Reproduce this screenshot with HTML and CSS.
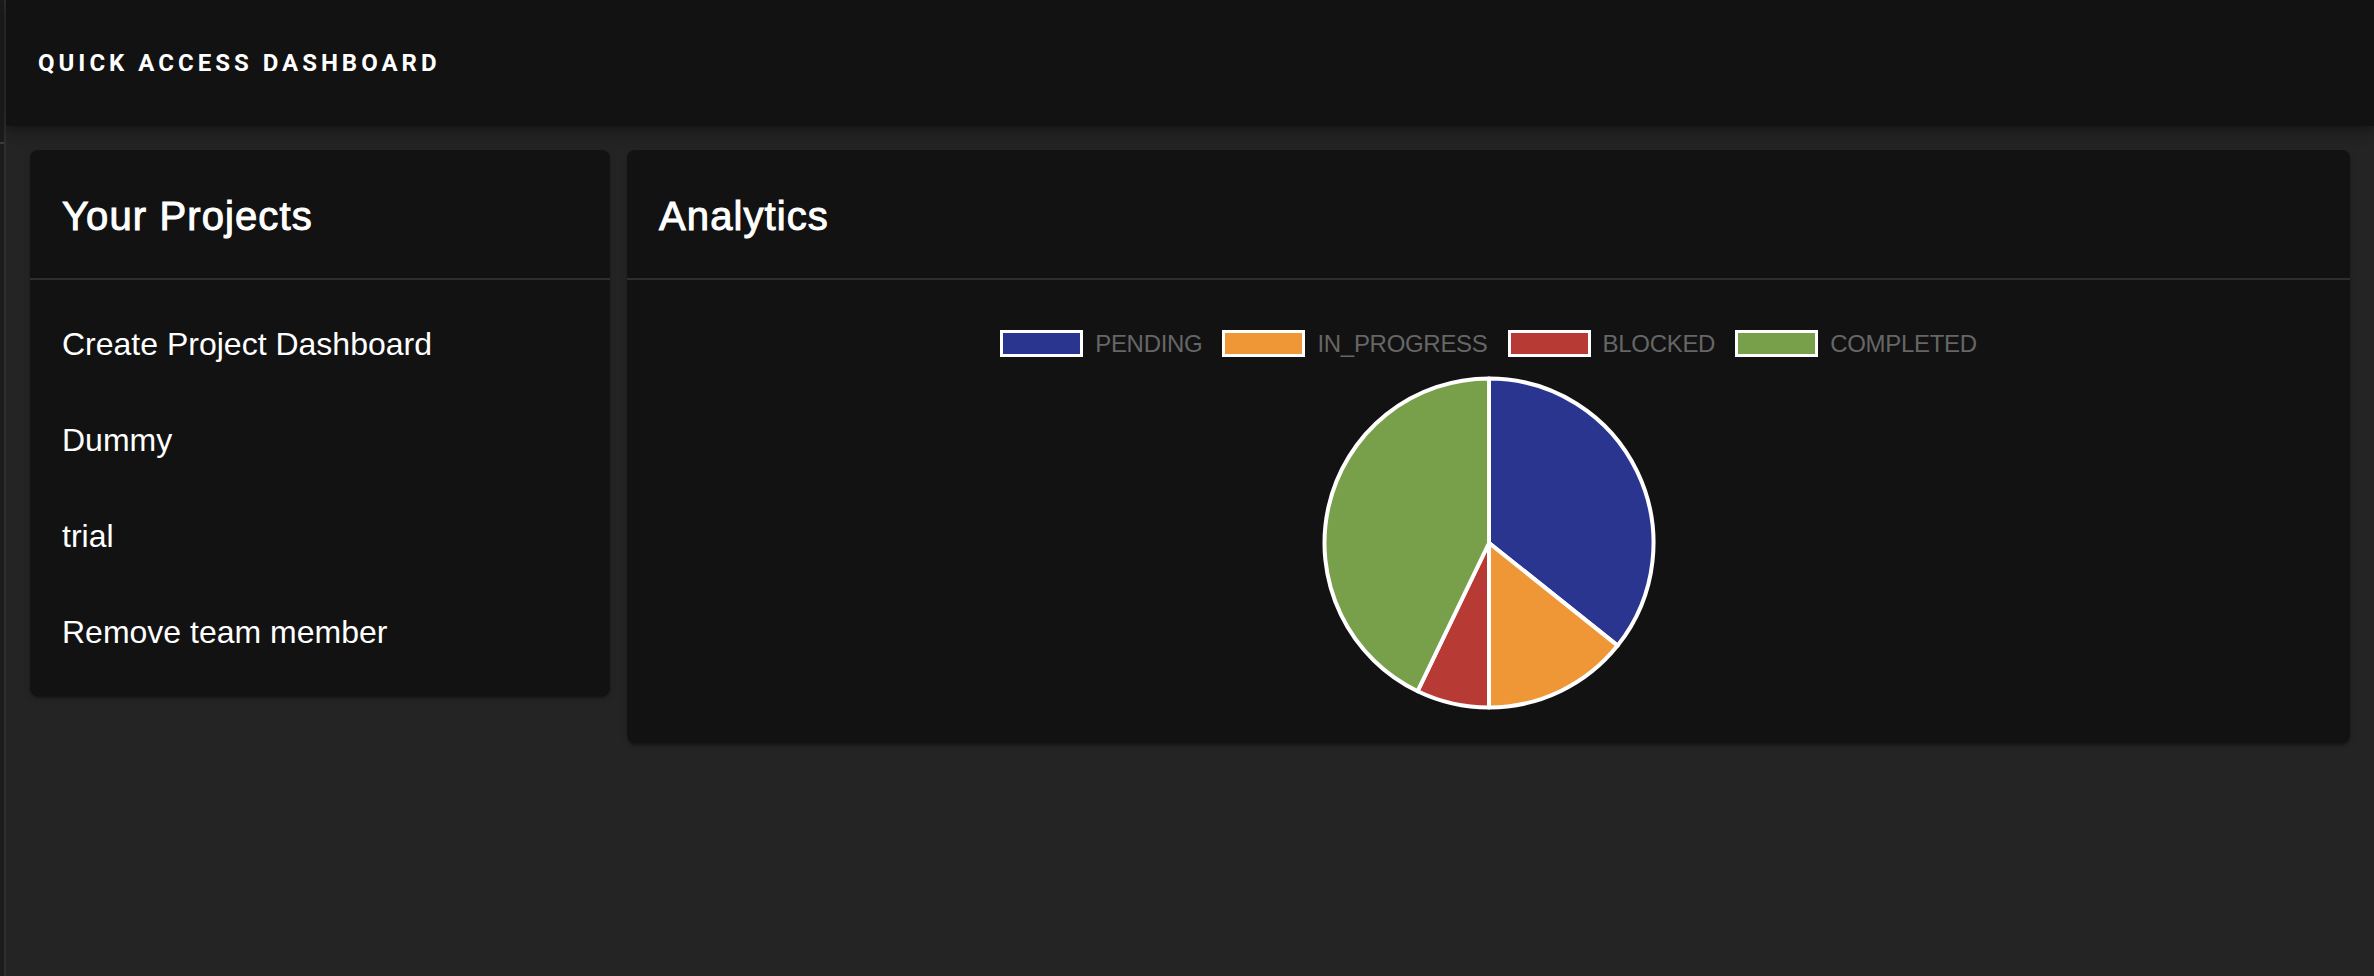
FILE: index.html
```html
<!DOCTYPE html>
<html lang="en">
<head>
<meta charset="utf-8">
<title>Quick Access Dashboard</title>
<link rel="stylesheet" href="styles.css">
</head>
<body>
<div class="app">
  <aside class="drawer"><div class="drawer-divider"></div></aside>
  <div class="main">
    <header class="appbar">
      <h1 class="brand">QUICK ACCESS DASHBOARD</h1>
    </header>
    <div class="content">
      <section class="card projects">
        <div class="card-header"><h2 class="card-title">Your Projects</h2></div>
        <div class="divider"></div>
        <ul class="list">
          <li class="list-item">Create Project Dashboard</li>
          <li class="list-item">Dummy</li>
          <li class="list-item">trial</li>
          <li class="list-item">Remove team member</li>
        </ul>
      </section>
      <section class="card analytics">
        <div class="card-header"><h2 class="card-title">Analytics</h2></div>
        <div class="divider"></div>
        <div class="card-content">
          <div class="legend">
            <div class="legend-item"><span class="swatch pending"></span><span class="legend-label">PENDING</span></div>
            <div class="legend-item"><span class="swatch progress"></span><span class="legend-label">IN_PROGRESS</span></div>
            <div class="legend-item"><span class="swatch blocked"></span><span class="legend-label">BLOCKED</span></div>
            <div class="legend-item"><span class="swatch completed"></span><span class="legend-label">COMPLETED</span></div>
          </div>
          <svg class="pie" width="340" height="340" viewBox="0 0 340 340">
            <g stroke="#ffffff" stroke-width="4" stroke-linejoin="round">
              <path fill="#2a358f" d="M170 170 L170 5.5 A164.5 164.5 0 0 1 298.61 272.57 Z"/>
              <path fill="#ef9737" d="M170 170 L298.61 272.57 A164.5 164.5 0 0 1 170 334.5 Z"/>
              <path fill="#b83a34" d="M170 170 L170 334.5 A164.5 164.5 0 0 1 98.63 318.21 Z"/>
              <path fill="#789f4a" d="M170 170 L98.63 318.21 A164.5 164.5 0 0 1 170 5.5 Z"/>
            </g>
          </svg>
        </div>
      </section>
    </div>
  </div>
</div>
</body>
</html>
```

FILE: styles.css
```css
* { box-sizing: border-box; }
html, body {
  margin: 0;
  padding: 0;
  height: 100%;
  background: #242424;
  font-family: "Liberation Sans", Arial, sans-serif;
  color: #ffffff;
}
.app {
  display: flex;
  min-height: 100vh;
}
.drawer {
  width: 6px;
  flex: 0 0 6px;
  background: #1c1c1c;
  border-right: 2px solid #2e2e2e;
  padding-top: 142px;
}
.drawer-divider {
  height: 2px;
  background: #3a3a3a;
}
.main {
  flex: 1;
  display: flex;
  flex-direction: column;
}
.appbar {
  height: 126px;
  background: #121212;
  display: flex;
  align-items: center;
  padding-left: 32px;
  box-shadow: 0 4px 8px -2px rgba(0,0,0,0.2), 0 8px 10px 0 rgba(0,0,0,0.14), 0 2px 20px 0 rgba(0,0,0,0.12);
  position: relative;
  z-index: 1;
}
.brand {
  margin: 0;
  font-family: Roboto, "Liberation Sans", sans-serif;
  font-weight: 700;
  font-size: 24px;
  letter-spacing: 4px;
  line-height: 1;
  color: #ffffff;
}
.content {
  display: grid;
  grid-template-columns: 580px 1fr;
  gap: 17px;
  align-items: start;
  padding: 24px 24px 24px 24px;
}
.card {
  background: #121212;
  border-radius: 8px;
  box-shadow: 0 4px 2px -2px rgba(0,0,0,0.2), 0 2px 2px 0 rgba(0,0,0,0.14), 0 2px 6px 0 rgba(0,0,0,0.12);
  overflow: hidden;
}
.card-header {
  height: 128px;
  padding: 34px 32px 30px;
}
.card-title {
  margin: 0;
  font-size: 40px;
  line-height: 64px;
  font-weight: 400;
  letter-spacing: 1.1px;
  -webkit-text-stroke: 1px #ffffff;
  color: #ffffff;
}
.divider {
  height: 2px;
  background: #2e2e2e;
}
.list {
  list-style: none;
  margin: 0;
  padding: 16px 0;
}
.list-item {
  padding: 24px 32px;
  font-size: 32px;
  line-height: 48px;
  color: #ffffff;
}
.card-content {
  padding: 32px 32px 30px;
  display: flex;
  flex-direction: column;
  align-items: center;
}
.legend {
  margin-top: 18px;
  display: flex;
  justify-content: center;
  gap: 20px;
}
.legend-item {
  display: flex;
  align-items: center;
  gap: 12px;
  height: 27px;
}
.swatch {
  display: block;
  width: 83px;
  height: 27px;
  border: 3px solid #ffffff;
}
.swatch.pending { background: #2a358f; }
.swatch.progress { background: #ef9737; }
.swatch.blocked { background: #b83a34; }
.swatch.completed { background: #789f4a; }
.legend-label {
  font-size: 24px;
  line-height: 27px;
  letter-spacing: -0.3px;
  color: #666666;
}
.pie {
  display: block;
  margin-top: 16px;
}
```
